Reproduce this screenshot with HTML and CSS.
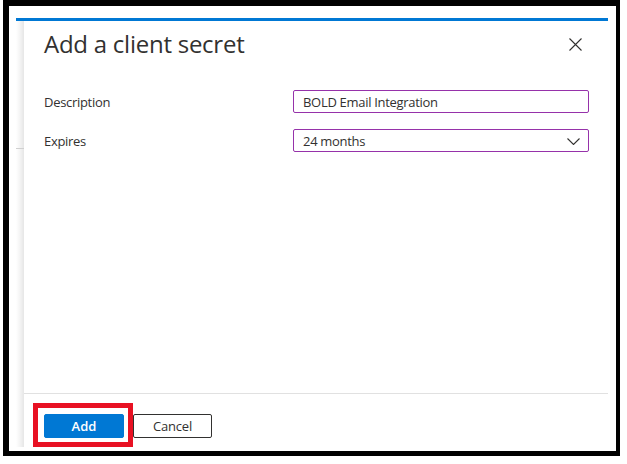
FILE: index.html
```html
<!DOCTYPE html>
<html lang="en">
<head>
<meta charset="utf-8">
<title>Add a client secret</title>
<link rel="stylesheet" href="styles.css">
</head>
<body>
<div class="frame">
  <div class="panel">
    <div class="accent"></div>
    <div class="panel-row">
      <div class="edge-shadow"><span class="edge-line"></span></div>
      <section class="blade">
        <header class="blade-head">
          <h1 class="blade-title">Add a client secret</h1>
          <button class="close" aria-label="Close">
            <svg width="13" height="13" viewBox="0 0 13 13"><path d="M0.5 0.5L12.5 12.5M12.5 0.5L0.5 12.5" stroke="#323130" stroke-width="1.1" fill="none"/></svg>
          </button>
        </header>
        <div class="form">
          <div class="field">
            <label class="field-label">Description</label>
            <div class="input">BOLD Email Integration</div>
          </div>
          <div class="field">
            <label class="field-label">Expires</label>
            <div class="input select">
              <span>24 months</span>
              <svg width="13" height="7" viewBox="0 0 13 7"><path d="M0.5 0.5L6.5 6.5L12.5 0.5" stroke="#323130" stroke-width="1.1" fill="none"/></svg>
            </div>
          </div>
        </div>
        <footer class="blade-foot">
          <span class="primary-wrap">
            <button class="btn btn-primary">Add</button>
            <span class="callout"></span>
          </span>
          <button class="btn btn-default">Cancel</button>
        </footer>
      </section>
    </div>
  </div>
</div>
</body>
</html>
```

FILE: styles.css
```css
* { box-sizing: border-box; }

html, body {
  margin: 0;
  background: #ffffff;
}

body {
  padding: 0 7px 0 3px;
  font-family: "Segoe UI", "Open Sans", "Noto Sans", sans-serif;
  color: #323130;
}

.frame {
  height: 456px;
  border-style: solid;
  border-color: #000000;
  border-width: 6px 4px 5px 6px;
  padding: 12px 8px 4px 7px;
  display: flex;
}

.panel {
  flex: 1;
  display: flex;
  flex-direction: column;
}

.accent {
  height: 3px;
  background: #0078d4;
}

.panel-row {
  flex: 1;
  display: flex;
}

.edge-shadow {
  width: 8px;
  background: linear-gradient(to right, #ffffff 0%, #f4f4f4 50%, #e6e6e6 100%);
  padding-top: 127px;
}

.edge-line {
  display: block;
  height: 1px;
  background: #d0d0d0;
}

.blade {
  flex: 1;
  display: flex;
  flex-direction: column;
  background: #ffffff;
}

.blade-head {
  display: flex;
  align-items: flex-start;
  justify-content: space-between;
  padding: 7px 26px 0 20px;
  height: 64px;
}

.blade-title {
  margin: 0;
  font-size: 24px;
  font-weight: 400;
  line-height: 32px;
  letter-spacing: -0.25px;
}

.close {
  margin-top: 10px;
  padding: 0;
  border: 0;
  background: none;
  width: 13px;
  height: 13px;
  display: flex;
}

.form {
  flex: 1;
  padding: 5px 19px 0 20px;
  display: flex;
  flex-direction: column;
  gap: 16px;
}

.field {
  display: flex;
  align-items: center;
}

.field-label {
  width: 249px;
  font-size: 13px;
  letter-spacing: -0.3px;
}

.input {
  flex: 1;
  height: 23px;
  border: 1px solid #9632aa;
  border-radius: 2px;
  padding: 1px 8px 0 9px;
  font-size: 13px;
  letter-spacing: -0.3px;
  line-height: 21px;
  display: flex;
  align-items: center;
  justify-content: space-between;
}

.blade-foot {
  border-top: 1px solid #e1e1e1;
  padding: 20px 20px 9px;
  display: flex;
  gap: 9px;
}

.primary-wrap {
  position: relative;
  display: flex;
}

.btn {
  height: 24px;
  width: 80px;
  border-radius: 2px;
  font-family: inherit;
  font-size: 13px;
  padding: 0;
  line-height: 22px;
}

.btn-primary {
  background: #0078d4;
  border: 1px solid #0078d4;
  color: #ffffff;
  font-weight: 600;
}

.btn-default {
  width: 79px;
  background: #ffffff;
  border: 1px solid #323130;
  color: #323130;
  letter-spacing: -0.2px;
}

/* annotation frame drawn around the primary action */
.callout {
  position: absolute;
  left: -11px;
  top: -11px;
  right: -9px;
  bottom: -9px;
  border: 5px solid #e81123;
  pointer-events: none;
}
```
